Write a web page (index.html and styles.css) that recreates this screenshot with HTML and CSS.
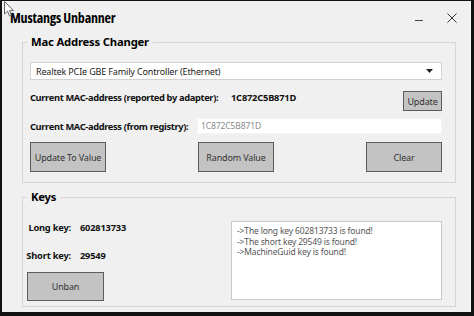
FILE: index.html
```html
<!DOCTYPE html>
<html>
<head>
<meta charset="utf-8">
<link rel="stylesheet" href="styles.css">
</head>
<body>
<div class="window">
  <div class="titlebar">
    <span class="title">Mustangs Unbanner</span>
    <div class="controls">
      <span class="ctl min"><svg width="8" height="10" viewBox="0 0 8 10"><path d="M0 7.5H8" stroke="#444" stroke-width="1"/></svg></span>
      <span class="ctl"><svg width="10" height="10" viewBox="0 0 10 10"><path d="M0.5 0.5L9.5 9.5M9.5 0.5L0.5 9.5" stroke="#333" stroke-width="1"/></svg></span>
    </div>
  </div>
  <div class="content">
    <fieldset class="group mac">
      <legend>Mac Address Changer</legend>
      <div class="combo">
        <span>Realtek PCIe GBE Family Controller (Ethernet)</span>
        <svg class="arrow" width="7" height="4" viewBox="0 0 7 4"><path d="M0 0H7L3.5 4Z" fill="#222"/></svg>
      </div>
      <div class="row adapter">
        <span class="lbl">Current MAC-address (reported by adapter):</span>
        <span class="val">1C872C5B871D</span>
        <button class="btn small">Update</button>
      </div>
      <div class="row registry">
        <span class="lbl">Current MAC-address (from registry):</span>
        <div class="input">1C872C5B871D</div>
      </div>
      <div class="actions">
        <button class="btn big">Update To Value</button>
        <button class="btn big">Random Value</button>
        <button class="btn big">Clear</button>
      </div>
    </fieldset>
    <fieldset class="group keys">
      <legend>Keys</legend>
      <div class="keys-body">
        <div class="keys-left">
          <div class="key-row"><span class="klbl">Long key:</span><span class="kval">602813733</span></div>
          <div class="key-row second"><span class="klbl">Short key:</span><span class="kval">29549</span></div>
          <button class="btn big unban">Unban</button>
        </div>
        <div class="log">
          <div>-&gt;The long key 602813733 is found!</div>
          <div>-&gt;The short key 29549 is found!</div>
          <div>-&gt;MachineGuid key is found!</div>
        </div>
      </div>
    </fieldset>
  </div>
</div>
<svg class="cursor" width="12" height="16" viewBox="0 0 12 16"><path d="M0.5 0.5V13L3.5 10.2L5.6 15L7.4 14.2L5.4 9.6H9.5Z" fill="#fff" stroke="#666" stroke-width="1"/></svg>
</body>
</html>
```
FILE: styles.css
```css
* { box-sizing: border-box; }
html, body { margin: 0; padding: 0; }
body {
  width: 474px;
  height: 316px;
  overflow: hidden;
  background: #121212;
  position: relative;
  font-family: "Noto Sans", "Open Sans", sans-serif;
  color: #111;
}
.window {
  margin: 1px 3px 0 2px;
  height: 311px;
  background: #f0f0f0;
  border-right: 1px solid #fafafa;
}
.titlebar {
  height: 33px;
  display: flex;
  align-items: center;
  padding-left: 8px;
  padding-right: 2px;
}
.title {
  font-family: "Open Sans", "Noto Sans", sans-serif;
  font-weight: 700;
  font-size: 14px;
  font-stretch: 75%;
  letter-spacing: -0.2px;
  color: #000;
}
.controls { margin-left: auto; display: flex; }
.ctl {
  width: 33px;
  height: 33px;
  display: flex;
  align-items: center;
  justify-content: center;
}
.content { padding: 0 14px 0 20px; }
.group {
  margin: 0;
  min-width: 0;
  border: 1px solid #d6d6d6;
}
.group legend {
  padding: 0 4px;
  font-weight: 700;
  font-size: 11.3px;
  line-height: 16px;
  letter-spacing: -0.2px;
  color: #000;
}
.mac { padding: 12px 13px 10px 7px; }
.mac legend { margin-left: -3px; }
.combo {
  height: 18px;
  background: #fff;
  border: 1px solid #d2d2d2;
  display: flex;
  align-items: center;
  padding: 0 8px 0 5px;
  font-size: 9px;
  letter-spacing: -0.15px;
  color: #222;
}
.combo .arrow { margin-left: auto; }
.row { display: flex; align-items: center; }
.lbl {
  font-weight: 700;
  font-size: 9.3px;
  letter-spacing: -0.35px;
  color: #111;
  white-space: nowrap;
}
.adapter { height: 20px; margin-top: 11px; align-items: flex-start; }
.adapter .lbl, .adapter .val { line-height: 14px; }
.adapter .lbl { width: 201px; }
.val {
  font-weight: 700;
  font-size: 9.3px;
  letter-spacing: -0.2px;
}
.registry { height: 16px; margin-top: 7px; }
.registry .lbl { width: 167px; }
.input {
  flex: 1;
  height: 16px;
  background: #fff;
  border: 1px solid #f4f4f4;
  padding-left: 3px;
  font-size: 8.5px;
  line-height: 14px;
  color: #8a8a8a;
  letter-spacing: -0.1px;
}
.btn {
  font-family: inherit;
  background: #c3c3c3;
  border: 1px solid #5c5c5c;
  font-size: 9px;
  color: #333;
  padding: 0;
  letter-spacing: -0.15px;
}
.small { margin-left: auto; width: 39px; height: 20px; }
.big { width: 76px; height: 30px; }
.actions {
  margin-top: 8px;
  display: flex;
  justify-content: space-between;
}
.keys { margin-top: 6px; padding: 13px 13px 5px 2px; }
.keys legend { margin-left: 2px; }
.keys-body { display: flex; align-items: flex-start; }
.keys-left { width: 206px; display: flex; flex-direction: column; }
.key-row {
  height: 18px;
  display: grid;
  grid-template-columns: 46px auto;
  column-gap: 9px;
  align-items: center;
  font-weight: 700;
  font-size: 9.3px;
  letter-spacing: -0.2px;
  white-space: nowrap;
}
.key-row.second { margin-top: 10px; }
.klbl { text-align: right; }
.unban { margin-top: 8px; margin-left: 2px; width: 77px; height: 29px; }
.log {
  flex: 1;
  margin-top: 3px;
  height: 79px;
  background: #fff;
  border: 1px solid #c9c9c9;
  padding: 4px 5px;
  font-size: 8.5px;
  line-height: 10.5px;
  color: #555;
  letter-spacing: -0.15px;
}
.cursor { position: absolute; left: 4px; top: 1px; }
```
